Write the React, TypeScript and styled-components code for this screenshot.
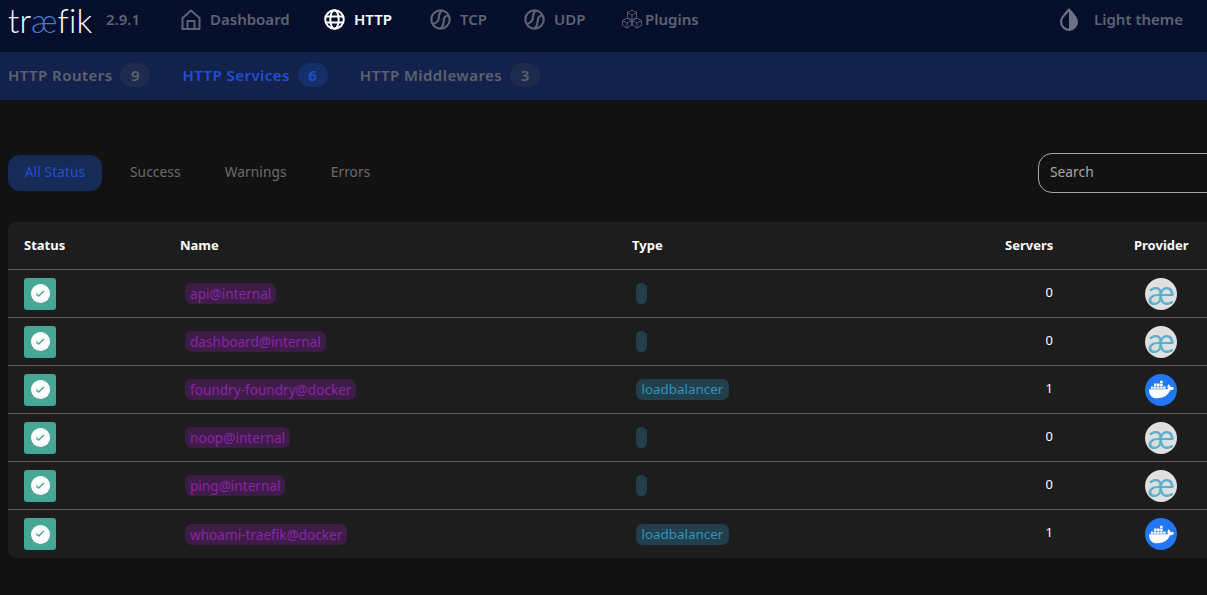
import styled, { createGlobalStyle } from "styled-components";
import { Check } from "lucide-react";
import { FaDocker } from "react-icons/fa";

const GlobalStyle = createGlobalStyle`
  html, body {
    margin: 0;
    height: 100%;
    background-color: #121212;
    overflow: hidden;
  }
  body {
    font-family: "Noto Sans", "Open Sans", sans-serif;
  }
`;

const Page = styled.div`
  width: 1207px;
  height: 595px;
  overflow: hidden;
  background-color: #121212;
`;

const TopBar = styled.header`
  height: 52px;
  background-color: #050f2b;
  display: flex;
  align-items: flex-start;
  padding: 5px 0 0 8px;
  box-sizing: border-box;
`;

const Logo = styled.div`
  width: 98px;
  flex-shrink: 0;
  font-family: "Lato", sans-serif;
  font-weight: 300;
  font-size: 33px;
  line-height: 30px;
  letter-spacing: 0.2px;
  color: #ffffff;

  span {
    color: #4a78d0;
  }
`;

const Version = styled.span`
  width: 75px;
  flex-shrink: 0;
  font-weight: 600;
  font-size: 15px;
  line-height: 28px;
  color: #5d6274;
`;

const NavList = styled.nav`
  display: flex;
  align-items: center;
  height: 28px;
  flex: 1;
`;

const NavItem = styled.div<{ $active?: boolean; $width: number; $gap?: number }>`
  width: ${(p) => p.$width}px;
  flex-shrink: 0;
  display: flex;
  align-items: center;
  gap: ${(p) => p.$gap ?? 9}px;
  font-weight: 600;
  font-size: 15px;
  color: ${(p) => (p.$active ? "#ffffff" : "#5d6274")};

  svg {
    flex-shrink: 0;
  }
`;

const ThemeToggle = styled(NavItem)`
  gap: 15px;
`;

const SubBar = styled.div`
  height: 48px;
  box-sizing: border-box;
  padding: 0 8px 2px;
  background-color: #12224d;
  display: flex;
  align-items: center;
  gap: 32px;
`;

const SubTab = styled.div<{ $active?: boolean }>`
  display: flex;
  align-items: center;
  gap: 8px;
  font-weight: 600;
  font-size: 15px;
  letter-spacing: 0.45px;
  color: ${(p) => (p.$active ? "#2150d6" : "#5e626c")};
`;

const Counter = styled.span<{ $active?: boolean }>`
  width: 30px;
  height: 24px;
  border-radius: 12px;
  display: flex;
  align-items: center;
  justify-content: center;
  background-color: ${(p) => (p.$active ? "#14306a" : "#1f2b4e")};
`;

const Content = styled.main`
  width: 1232px;
  padding: 53px 0 0 8px;
`;

const FilterRow = styled.div`
  display: flex;
  align-items: center;
  justify-content: space-between;
  height: 40px;
  margin-bottom: 29px;
`;

const Filters = styled.div`
  display: flex;
  gap: 12px;
`;

const FilterPill = styled.button<{ $active?: boolean }>`
  height: 36px;
  min-width: ${(p) => (p.$active ? "94px" : "0")};
  padding: 0 16px 3px;
  border: 0;
  border-radius: 12px;
  font-family: inherit;
  font-size: 13.7px;
  letter-spacing: 0.1px;
  background-color: ${(p) => (p.$active ? "#172b57" : "transparent")};
  color: ${(p) => (p.$active ? "#2150d6" : "#6c6c6c")};
`;

const SearchBox = styled.input`
  width: 202px;
  height: 40px;
  box-sizing: border-box;
  padding: 0 11px 3px;
  border: 1px solid #a8a8a8;
  border-radius: 14px;
  background: transparent;
  font-family: inherit;
  font-size: 13.8px;
  outline: none;

  &::placeholder {
    color: #a8a8a8;
    opacity: 1;
  }
`;

const Table = styled.div`
  background-color: #1d1d1d;
  border-radius: 8px;
`;

const Row = styled.div<{ $head?: boolean; $last?: boolean }>`
  display: grid;
  grid-template-columns: 156px 452px 1fr 80px 171px;
  align-items: center;
  height: ${(p) => (p.$last ? "48px" : "47px")};
  border-bottom: ${(p) => (p.$last ? "0" : "1px solid #5c5c5c")};
  font-size: 13px;
  font-weight: ${(p) => (p.$head ? 700 : 400)};
  color: #ffffff;
`;

const Cell = styled.div`
  padding: 0 16px;
`;

const HeadCell = styled(Cell)`
  padding-bottom: 2px;
`;

const ServersCell = styled(Cell)`
  text-align: right;
  padding-bottom: 4px;
`;

const ServersHead = styled(HeadCell)`
  text-align: right;
`;

const ProviderCell = styled(Cell)`
  padding-left: 65px;
`;

const ProviderHead = styled(HeadCell)`
  padding-left: 65px;
`;

const StatusBox = styled.div`
  width: 32px;
  height: 32px;
  border-radius: 3px;
  background-color: #46a797;
  display: flex;
  align-items: center;
  justify-content: center;
`;

const StatusDot = styled.div`
  width: 19px;
  height: 19px;
  border-radius: 50%;
  background-color: #ffffff;
  color: #46a797;
  display: flex;
  align-items: center;
  justify-content: center;
`;

const Chip = styled.span<{ $kind: "name" | "type" }>`
  display: inline-block;
  height: 21px;
  line-height: 21px;
  margin-left: ${(p) => (p.$kind === "name" ? "5px" : "4px")};
  padding: 0 ${(p) => (p.$kind === "name" ? "5px" : "5.5px")};
  border-radius: 7px;
  font-size: ${(p) => (p.$kind === "name" ? "13.6px" : "13.4px")};
  vertical-align: middle;
  background-color: ${(p) => (p.$kind === "name" ? "#3d1d47" : "#223f4d")};
  color: ${(p) => (p.$kind === "name" ? "#8e24aa" : "#3395bb")};
`;

const ProviderBadge = styled.div<{ $docker?: boolean }>`
  width: 32px;
  height: 32px;
  box-sizing: border-box;
  padding-bottom: ${(p) => (p.$docker ? "0" : "5px")};
  margin-left: 11px;
  border-radius: 50%;
  display: flex;
  align-items: center;
  justify-content: center;
  font-family: "Lato", sans-serif;
  font-size: 34px;
  line-height: 27px;
  background-color: ${(p) => (p.$docker ? "#2277f5" : "#e0e0e0")};
  color: ${(p) => (p.$docker ? "#ffffff" : "#5fb0cf")};
`;

function HomeIcon() {
  return (
    <svg width="20" height="21" viewBox="0 0 20 21" fill="none" stroke="#5d6274" strokeWidth="2" strokeLinejoin="round">
      <path d="M1.500 9 10 1.500 18.500 9v11h-17z" />
      <path d="M6.500 20v-8h7v8" />
    </svg>
  );
}

function GlobeIcon() {
  return (
    <svg width="21" height="21" viewBox="0 0 21 21" fill="none" stroke="#ffffff" strokeWidth="2">
      <circle cx="10.500" cy="10.500" r="9.300" />
      <ellipse cx="10.500" cy="10.500" rx="4.200" ry="9.300" />
      <path d="M2 7.500h17M2 13.500h17" />
    </svg>
  );
}

function BallIcon() {
  return (
    <svg width="21" height="21" viewBox="0 0 21 21" fill="none" stroke="#5d6274" strokeWidth="2.200">
      <circle cx="10.500" cy="10.500" r="9.200" />
      <path d="M12.500 1.500C8 3.500 9.500 7.500 8.500 10.500 7.700 13 5 14.500 2.500 15" />
      <path d="M18.800 6.500C15.500 6.500 13.800 8.500 13.800 11.500c0 2.800-1 5.300-2.600 7.800" />
    </svg>
  );
}

function CubesIcon() {
  const cube = (x: number, y: number) =>
    `M${x} ${y - 5}l4.500 2.500v5L${x} ${y + 5}l-4.500-2.500v-5zM${x - 4.500} ${y - 2.500}L${x} ${y}l4.500-2.500M${x} ${y}v5`;
  return (
    <svg width="20" height="20" viewBox="0 0 20 20" fill="none" stroke="#5d6274" strokeWidth="0.900" strokeLinejoin="round">
      <path d={cube(10, 6)} />
      <path d={cube(5, 14)} />
      <path d={cube(15, 14)} />
    </svg>
  );
}

function DropIcon() {
  return (
    <svg width="20" height="24" viewBox="0 0 20 24">
      <path d="M10 1c4 5 9 9 9 14a9 9 0 0 1-18 0C1 10 6 6 10 1z" fill="#6d7283" />
      <path d="M10 4.500C7 8 3.200 11 3.200 15A6.800 6.800 0 0 0 10 21.800z" fill="#050f2b" />
    </svg>
  );
}

type Service = { name: string; type: string; servers: number; provider: "internal" | "docker" };

const services: Service[] = [
  { name: "api@internal", type: "", servers: 0, provider: "internal" },
  { name: "dashboard@internal", type: "", servers: 0, provider: "internal" },
  { name: "foundry-foundry@docker", type: "loadbalancer", servers: 1, provider: "docker" },
  { name: "noop@internal", type: "", servers: 0, provider: "internal" },
  { name: "ping@internal", type: "", servers: 0, provider: "internal" },
  { name: "whoami-traefik@docker", type: "loadbalancer", servers: 1, provider: "docker" },
];

export default function App() {
  return (
    <Page>
      <GlobalStyle />
      <TopBar>
        <Logo>
          tr<span>æ</span>fik
        </Logo>
        <Version>2.9.1</Version>
        <NavList>
          <NavItem $width={143}>
            <HomeIcon />
            Dashboard
          </NavItem>
          <NavItem $active $width={106}>
            <GlobeIcon />
            HTTP
          </NavItem>
          <NavItem $width={94}>
            <BallIcon />
            TCP
          </NavItem>
          <NavItem $width={98}>
            <BallIcon />
            UDP
          </NavItem>
          <NavItem $width={437} $gap={3}>
            <CubesIcon />
            Plugins
          </NavItem>
          <ThemeToggle $width={130}>
            <DropIcon />
            Light theme
          </ThemeToggle>
        </NavList>
      </TopBar>
      <SubBar>
        <SubTab>
          HTTP Routers <Counter>9</Counter>
        </SubTab>
        <SubTab $active>
          HTTP Services <Counter $active>6</Counter>
        </SubTab>
        <SubTab>
          HTTP Middlewares <Counter>3</Counter>
        </SubTab>
      </SubBar>
      <Content>
        <FilterRow>
          <Filters>
            <FilterPill $active>All Status</FilterPill>
            <FilterPill>Success</FilterPill>
            <FilterPill>Warnings</FilterPill>
            <FilterPill>Errors</FilterPill>
          </Filters>
          <SearchBox placeholder="Search" />
        </FilterRow>
        <Table>
          <Row $head>
            <HeadCell>Status</HeadCell>
            <HeadCell>Name</HeadCell>
            <HeadCell>Type</HeadCell>
            <ServersHead>Servers</ServersHead>
            <ProviderHead>Provider</ProviderHead>
          </Row>
          {services.map((s, i) => (
            <Row key={s.name} $last={i === services.length - 1}>
              <Cell>
                <StatusBox>
                  <StatusDot>
                    <Check size={10} strokeWidth={3.5} />
                  </StatusDot>
                </StatusBox>
              </Cell>
              <Cell>
                <Chip $kind="name">{s.name}</Chip>
              </Cell>
              <Cell>
                <Chip $kind="type">{s.type}</Chip>
              </Cell>
              <ServersCell>{s.servers}</ServersCell>
              <ProviderCell>
                <ProviderBadge $docker={s.provider === "docker"}>
                  {s.provider === "docker" ? <FaDocker size={25} /> : "æ"}
                </ProviderBadge>
              </ProviderCell>
            </Row>
          ))}
        </Table>
      </Content>
    </Page>
  );
}
